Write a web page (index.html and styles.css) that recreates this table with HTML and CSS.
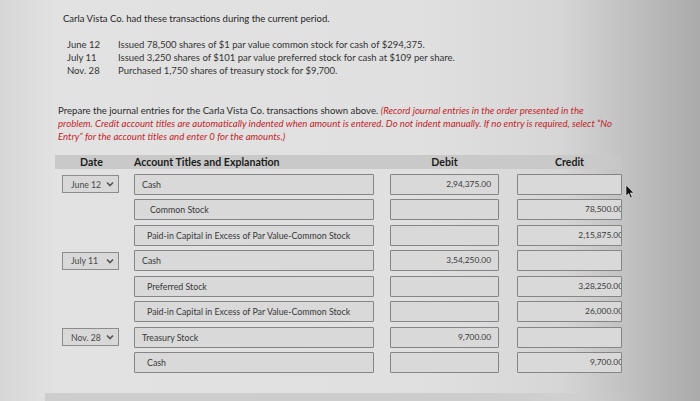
FILE: index.html
```html
<!DOCTYPE html>
<html>
<head>
<meta charset="utf-8">
<link rel="stylesheet" href="styles.css">
</head>
<body>
<div class="page">
  <p class="intro">Carla Vista Co. had these transactions during the current period.</p>
  <div class="trans">
    <span>June 12</span><span>Issued 78,500 shares of $1 par value common stock for cash of $294,375.</span>
    <span>July 11</span><span>Issued 3,250 shares of $101 par value preferred stock for cash at $109 per share.</span>
    <span>Nov. 28</span><span>Purchased 1,750 shares of treasury stock for $9,700.</span>
  </div>
  <p class="prepare">Prepare the journal entries for the Carla Vista Co. transactions shown above. <em>(Record journal entries in the order presented in the<br>problem. Credit account titles are automatically indented when amount is entered. Do not indent manually. If no entry is required, select “No<br>Entry” for the account titles and enter 0 for the amounts.)</em></p>

  <div class="journal">
    <div class="hdr hdate">Date</div>
    <div class="hdr hacct">Account Titles and Explanation</div>
    <div class="hdr hnum">Debit</div>
    <div class="hdr hnum hcred">Credit</div>

    <div class="cell"><div class="sel">June 12<svg class="chev" viewBox="0 0 8 6"><polyline points="1,1.5 4,4.5 7,1.5"/></svg></div></div>
    <div class="cell"><div class="box acct">Cash</div></div>
    <div class="cell"><div class="box deb">2,94,375.00</div></div>
    <div class="cell"><div class="box cred"></div></div>

    <div class="cell"></div>
    <div class="cell"><div class="box acct ind">Common Stock</div></div>
    <div class="cell"><div class="box deb"></div></div>
    <div class="cell"><div class="box cred"><span>78,500.00</span></div></div>

    <div class="cell"></div>
    <div class="cell"><div class="box acct ind2">Paid-in Capital in Excess of Par Value-Common Stock</div></div>
    <div class="cell"><div class="box deb"></div></div>
    <div class="cell"><div class="box cred"><span>2,15,875.00</span></div></div>

    <div class="cell"><div class="sel">July 11<svg class="chev" viewBox="0 0 8 6"><polyline points="1,1.5 4,4.5 7,1.5"/></svg></div></div>
    <div class="cell"><div class="box acct">Cash</div></div>
    <div class="cell"><div class="box deb">3,54,250.00</div></div>
    <div class="cell"><div class="box cred"></div></div>

    <div class="cell"></div>
    <div class="cell"><div class="box acct ind2">Preferred Stock</div></div>
    <div class="cell"><div class="box deb"></div></div>
    <div class="cell"><div class="box cred"><span>3,28,250.00</span></div></div>

    <div class="cell"></div>
    <div class="cell"><div class="box acct ind2">Paid-in Capital in Excess of Par Value-Common Stock</div></div>
    <div class="cell"><div class="box deb"></div></div>
    <div class="cell"><div class="box cred"><span>26,000.00</span></div></div>

    <div class="cell"><div class="sel">Nov. 28<svg class="chev" viewBox="0 0 8 6"><polyline points="1,1.5 4,4.5 7,1.5"/></svg></div></div>
    <div class="cell"><div class="box acct">Treasury Stock</div></div>
    <div class="cell"><div class="box deb">9,700.00</div></div>
    <div class="cell"><div class="box cred"></div></div>

    <div class="cell"></div>
    <div class="cell"><div class="box acct ind2">Cash</div></div>
    <div class="cell"><div class="box deb"></div></div>
    <div class="cell"><div class="box cred"><span>9,700.00</span></div></div>
  </div>
  <div class="nextbar"></div>
</div>
<svg class="cursor" viewBox="0 0 10 15"><path d="M1 1 L1 12 L3.6 9.6 L5.6 14 L7.2 13.3 L5.3 9 L8.8 9 Z" fill="#111" stroke="#eee" stroke-width="0.6"/></svg>
</body>
</html>
```

FILE: styles.css
```css
html, body {
  margin: 0;
  padding: 0;
}
body {
  width: 700px;
  height: 401px;
  overflow: hidden;
  position: relative;
  font-family: Lato, "Open Sans", "Liberation Sans", sans-serif;
  color: #262626;
  background: linear-gradient(to right, #d6d6d6 0%, #e2e2e2 8%, #e0e0e0 60%, #d6d6d6 80%, #c0c0c0 90%, #aaaaaa 100%);
}
.page {
  padding: 13px 0 0 55px;
}
p {
  margin: 0;
}
.intro {
  margin-left: 8px;
  font-size: 9.5px;
  line-height: 12px;
}
.trans {
  margin: 13px 0 0 12px;
  display: grid;
  grid-template-columns: 51px auto;
  font-size: 9.5px;
  line-height: 13px;
  color: #333;
}
.prepare {
  margin: 27px 0 0 3px;
  font-size: 9.6px;
  line-height: 13px;
  color: #2b2b2b;
  white-space: nowrap;
}
.prepare em {
  color: #c21f29;
  font-style: italic;
}
.journal {
  margin-top: 12px;
  display: grid;
  grid-template-columns: 79px 256px 127px 105px;
  grid-template-rows: 14px;
  grid-auto-rows: 21px;
  row-gap: 4.5px;
  width: 567px;
}
.hdr {
  height: 14px;
  background: #c9c9c9;
  font-weight: 700;
  font-size: 10.6px;
  line-height: 14px;
  color: #1c1c1c;
}
.hdate {
  text-align: center;
  padding-right: 6px;
}
.hnum {
  text-align: center;
  padding-right: 18px;
}
.hcred {
  padding-right: 0;
  background: linear-gradient(to right, #c9c9c9 85%, rgba(201,201,201,0.4));
}
.cell {
  display: flex;
  align-items: center;
}
.sel {
  margin-left: 7px;
  width: 57px;
  height: 18px;
  box-sizing: border-box;
  border: 1px solid #8c8c8c;
  background: #d8d8d8;
  font-size: 8.7px;
  color: #4a4a4a;
  display: flex;
  align-items: center;
  justify-content: space-between;
  padding: 0 4px 0 8px;
}
.chev {
  width: 8px;
  height: 6px;
  fill: none;
  stroke: #555;
  stroke-width: 1.6;
}
.box {
  height: 21px;
  box-sizing: border-box;
  border: 1px solid #858585;
  border-radius: 1px;
  background: #d9d9d9;
  font-size: 8.8px;
  line-height: 19px;
  color: #383838;
  white-space: nowrap;
  overflow: hidden;
}
.acct {
  width: 240px;
  padding-left: 7px;
}
.acct.ind {
  padding-left: 15px;
}
.acct.ind2 {
  padding-left: 12px;
}
.deb {
  width: 109px;
  text-align: right;
  padding-right: 7px;
  font-size: 8.4px;
}
.cred {
  width: 105px;
  text-align: right;
  padding-right: 0;
  font-size: 8.4px;
}
.cred span {
  display: inline-block;
  margin-right: -2px;
}
.nextbar {
  margin: 20px 0 0 -10px;
  width: 595px;
  height: 10px;
  background: linear-gradient(to right, #cdcdcd 80%, rgba(205,205,205,0));
}
.cursor {
  position: absolute;
  left: 625px;
  top: 184px;
  width: 10px;
  height: 15px;
}
```
